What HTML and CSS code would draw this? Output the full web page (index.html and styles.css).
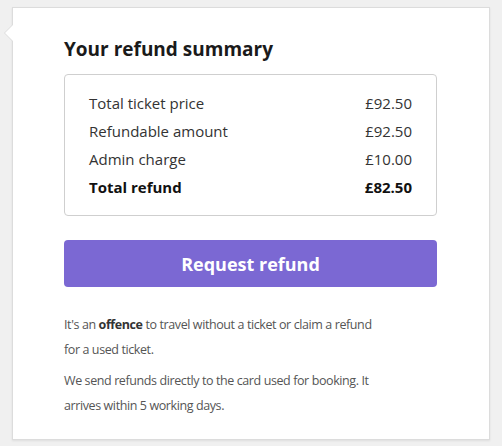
FILE: index.html
```html
<!DOCTYPE html>
<html>
<head>
<meta charset="utf-8">
<link rel="stylesheet" href="styles.css">
</head>
<body>
<div class="panel">
  <span class="arrow"></span>
  <h2 class="title">Your refund summary</h2>
  <div class="summary">
    <div class="row"><span>Total ticket price</span><span>£92.50</span></div>
    <div class="row"><span>Refundable amount</span><span>£92.50</span></div>
    <div class="row"><span>Admin charge</span><span>£10.00</span></div>
    <div class="row total"><span>Total refund</span><span>£82.50</span></div>
  </div>
  <button class="btn">Request refund</button>
  <p class="note">It's an <b>offence</b> to travel without a ticket or claim a refund for a used ticket.</p>
  <p class="note">We send refunds directly to the card used for booking. It arrives within 5 working days.</p>
</div>
</body>
</html>
```
FILE: styles.css
```css
html, body {
  margin: 0;
  padding: 0;
  background: #f0f0f0;
  font-family: "Open Sans", "Noto Sans", sans-serif;
  color: #1d1d1d;
}
body {
  padding: 7px 12px 6px 12px;
}
.panel {
  position: relative;
  background: #fff;
  border: 1px solid #dcdcdc;
  box-shadow: 0 1px 2px rgba(0,0,0,0.08);
  width: 478px;
  box-sizing: border-box;
  padding: 28px 52px 30px 51px;
  height: 433px;
}
.arrow {
  position: absolute;
  left: -9px;
  top: 16px;
  width: 0;
  height: 0;
  border-top: 9px solid transparent;
  border-bottom: 9px solid transparent;
  border-right: 9px solid #dcdcdc;
}
.arrow::after {
  content: "";
  position: absolute;
  left: 1px;
  top: -8px;
  border-top: 8px solid transparent;
  border-bottom: 8px solid transparent;
  border-right: 8px solid #fff;
}
.title {
  margin: 0 0 12px 0;
  font-size: 19px;
  font-weight: 700;
  line-height: 26px;
  color: #1a1a1a;
}
.summary {
  border: 1px solid #cfcfcf;
  border-radius: 4px;
  padding: 14px 24px 14px 24px;
}
.row {
  display: flex;
  justify-content: space-between;
  font-size: 15px;
  line-height: 28px;
  color: #333;
}
.row.total {
  font-weight: 700;
  color: #111;
}
.btn {
  display: block;
  width: 100%;
  margin-top: 24px;
  height: 47px;
  border: none;
  border-radius: 4px;
  background: #7b68d3;
  color: #fff;
  font-family: inherit;
  font-size: 18px;
  font-weight: 700;
}
.note {
  margin: 25px 0 0 0;
  max-width: 318px;
  font-size: 12.5px;
  letter-spacing: -0.4px;
  line-height: 25px;
  color: #555;
}
.note + .note {
  margin-top: 6px;
}
.note b {
  color: #333;
}
```
